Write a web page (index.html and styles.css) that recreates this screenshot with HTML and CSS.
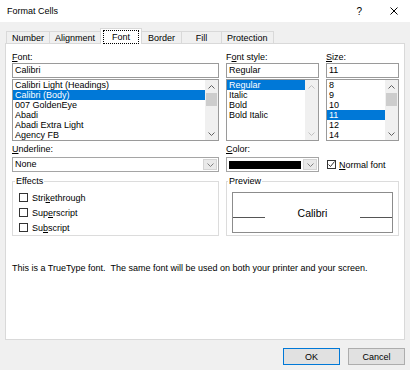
FILE: index.html
```html
<!DOCTYPE html>
<html lang="en">
<head>
    <meta charset="UTF-8">
    <meta name="viewport" content="width=device-width, initial-scale=1.0">
    <title>Format Cells</title>
    <link rel="stylesheet" href="styles.css">
</head>
<body>
<div class="dialog">
    <div class="titlebar">
        <span class="title">Format Cells</span>
        <span class="help">?</span>
        <svg class="close" width="8" height="8" viewBox="0 0 8 8"><path d="M0.5 0.5 L7.5 7.5 M7.5 0.5 L0.5 7.5" stroke="#000" stroke-width="1" fill="none"/></svg>
    </div>

    <div class="tabs">
        <div class="tab">Number</div>
        <div class="tab">Alignment</div>
        <div class="tab active"><span class="focus">Font</span></div>
        <div class="tab">Border</div>
        <div class="tab">Fill</div>
        <div class="tab">Protection</div>
    </div>

    <div class="panel">
        <div class="font-grid">
            <div class="label"><u>F</u>ont:</div>
            <div class="label">F<u>o</u>nt style:</div>
            <div class="label"><u>S</u>ize:</div>

            <div class="input">Calibri</div>
            <div class="input">Regular</div>
            <div class="input">11</div>

            <div class="list">
                <div class="items">
                    <div class="item">Calibri Light (Headings)</div>
                    <div class="item selected">Calibri (Body)</div>
                    <div class="item">007 GoldenEye</div>
                    <div class="item">Abadi</div>
                    <div class="item">Abadi Extra Light</div>
                    <div class="item">Agency FB</div>
                </div>
                <div class="scrollbar">
                    <div class="sb-arrow"><svg width="7" height="4" viewBox="0 0 7 4"><polyline points="0.5,3.5 3.5,0.5 6.5,3.5" fill="none" stroke="#606060"/></svg></div>
                    <div class="sb-thumb"></div>
                    <div class="sb-space"></div>
                    <div class="sb-arrow"><svg width="7" height="4" viewBox="0 0 7 4"><polyline points="0.5,0.5 3.5,3.5 6.5,0.5" fill="none" stroke="#606060"/></svg></div>
                </div>
            </div>
            <div class="list">
                <div class="items">
                    <div class="item selected">Regular</div>
                    <div class="item">Italic</div>
                    <div class="item">Bold</div>
                    <div class="item">Bold Italic</div>
                </div>
                <div class="scrollbar disabled">
                    <div class="sb-arrow"><svg width="7" height="4" viewBox="0 0 7 4"><polyline points="0.5,3.5 3.5,0.5 6.5,3.5" fill="none" stroke="#c0c0c0"/></svg></div>
                    <div class="sb-space"></div>
                    <div class="sb-arrow"><svg width="7" height="4" viewBox="0 0 7 4"><polyline points="0.5,0.5 3.5,3.5 6.5,0.5" fill="none" stroke="#c0c0c0"/></svg></div>
                </div>
            </div>
            <div class="list">
                <div class="items">
                    <div class="item">8</div>
                    <div class="item">9</div>
                    <div class="item">10</div>
                    <div class="item selected">11</div>
                    <div class="item">12</div>
                    <div class="item">14</div>
                </div>
                <div class="scrollbar">
                    <div class="sb-arrow"><svg width="7" height="4" viewBox="0 0 7 4"><polyline points="0.5,3.5 3.5,0.5 6.5,3.5" fill="none" stroke="#606060"/></svg></div>
                    <div class="sb-thumb"></div>
                    <div class="sb-space"></div>
                    <div class="sb-arrow"><svg width="7" height="4" viewBox="0 0 7 4"><polyline points="0.5,0.5 3.5,3.5 6.5,0.5" fill="none" stroke="#606060"/></svg></div>
                </div>
            </div>

            <div class="label label-gap"><u>U</u>nderline:</div>
            <div class="label label-gap"><u>C</u>olor:</div>
            <div></div>

            <div class="combo">
                <div class="combo-value">None</div>
                <div class="combo-btn"><svg width="7" height="4" viewBox="0 0 7 4"><polyline points="0.5,0.5 3.5,3.5 6.5,0.5" fill="none" stroke="#808080"/></svg></div>
            </div>
            <div class="combo">
                <div class="swatch"></div>
                <div class="combo-btn"><svg width="7" height="4" viewBox="0 0 7 4"><polyline points="0.5,0.5 3.5,3.5 6.5,0.5" fill="none" stroke="#808080"/></svg></div>
            </div>
            <div class="check-row normal">
                <span class="check"><svg width="7" height="7" viewBox="0 0 7 7"><polyline points="0.5,3.5 2.5,5.5 6.5,0.5" fill="none" stroke="#333"/></svg></span>
                <span><u>N</u>ormal font</span>
            </div>

            <fieldset class="group">
                <legend>Effects</legend>
                <div class="check-row"><span class="check"></span><span>Stri<u>k</u>ethrough</span></div>
                <div class="check-row"><span class="check"></span><span>Sup<u>e</u>rscript</span></div>
                <div class="check-row"><span class="check"></span><span>Su<u>b</u>script</span></div>
            </fieldset>
            <fieldset class="group preview">
                <legend>Preview</legend>
                <div class="preview-box">
                    <div class="rule"></div>
                    <div class="sample">Calibri</div>
                    <div class="rule"></div>
                </div>
            </fieldset>
        </div>

        <p class="info">This is a TrueType font.&nbsp; The same font will be used on both your printer and your screen.</p>
    </div>

    <div class="footer">
        <button class="btn default">OK</button>
        <button class="btn">Cancel</button>
    </div>
</div>
</body>
</html>
```

FILE: styles.css
```css
body {
    margin: 0;
    font-family: "Liberation Sans", Arial, sans-serif;
    font-size: 9px;
    color: #000;
}

.dialog {
    width: 410px;
    height: 370px;
    background-color: #f0f0f0;
    display: flex;
    flex-direction: column;
}

/* title bar */
.titlebar {
    height: 22px;
    background-color: #fff;
    display: flex;
    align-items: center;
    padding-left: 7px;
}

.title {
    flex: 1;
}

.help {
    font-size: 10px;
    margin-right: 28px;
}

.close {
    margin-right: 12px;
}

/* tabs */
.tabs {
    display: flex;
    align-items: flex-end;
    height: 15px;
    margin-top: 6px;
    padding-left: 6px;
}

.tab {
    box-sizing: border-box;
    height: 12px;
    min-width: 41px;
    padding: 1px 5px 0;
    line-height: 10px;
    text-align: center;
    border: 1px solid #d9d9d9;
    border-bottom: 0;
    margin-right: -1px;
}

.tab.active {
    position: relative;
    z-index: 1;
    height: 16px;
    margin-bottom: -1px;
    padding: 2px 3px 0;
    background-color: #fff;
}

.focus {
    display: inline-block;
    line-height: 10px;
    padding: 1px 8px;
    outline: 1px dotted #000;
}

/* tab page */
.panel {
    margin: 0 5px;
    height: 297px;
    box-sizing: border-box;
    background-color: #fff;
    border: 1px solid #d9d9d9;
    padding: 7px 0 0 6px;
}

.font-grid {
    display: grid;
    grid-template-columns: 207px 93px 73px;
    column-gap: 7px;
}

.label {
    line-height: 12px;
}

.label-gap {
    margin-top: 2px;
}

.input {
    box-sizing: border-box;
    height: 15px;
    border: 1px solid #9a9a9a;
    padding-left: 2px;
    line-height: 13px;
}

.list {
    box-sizing: border-box;
    height: 62px;
    margin-top: 1px;
    border: 1px solid #9a9a9a;
    display: flex;
}

.items {
    flex: 1;
}

.item {
    height: 10px;
    line-height: 10px;
    padding-left: 2px;
    white-space: nowrap;
}

.item.selected {
    background-color: #0078d7;
    color: #fff;
}

.scrollbar {
    width: 13px;
    background-color: #f0f0f0;
    display: flex;
    flex-direction: column;
}

.sb-arrow {
    height: 13px;
    display: flex;
    align-items: center;
    justify-content: center;
}

.sb-thumb {
    height: 13px;
    margin: 0 1px;
    background-color: #cdcdcd;
}

.sb-space {
    flex: 1;
}

.combo {
    box-sizing: border-box;
    height: 15px;
    margin-top: 2px;
    border: 1px solid #a5a5a5;
    display: flex;
}

.combo-value {
    flex: 1;
    padding-left: 2px;
    line-height: 13px;
}

.combo-btn {
    width: 12px;
    margin: 1px;
    background-color: #e9e9e9;
    border: 1px solid #d4d4d4;
    display: flex;
    align-items: center;
    justify-content: center;
}

.swatch {
    flex: 1;
    margin: 3px 1px 2px 2px;
    background-color: #000;
}

/* check boxes */
.check-row {
    display: flex;
    align-items: center;
    height: 15px;
}

.check {
    box-sizing: border-box;
    width: 9px;
    height: 9px;
    border: 1px solid #333;
    background-color: #fff;
    margin-right: 4px;
    display: flex;
}

.normal {
    margin-top: 2px;
    padding-left: 1px;
}

.normal .check {
    margin-right: 3px;
}

/* group boxes */
.group {
    margin: 3px 0 0;
    border: 1px solid #dcdcdc;
    padding: 3px 6px 0;
}

.group legend {
    line-height: 12px;
    padding: 0 1px;
    margin-left: -4px;
}

.preview {
    grid-column: 2 / 4;
    padding: 5px 5px 2px;
}

.preview-box {
    box-sizing: border-box;
    height: 41px;
    border: 1px solid #8c8c8c;
    display: flex;
    align-items: center;
    justify-content: space-between;
}

.rule {
    width: 32px;
    height: 1px;
    margin-top: 9px;
    background-color: #555;
}

.sample {
    font-size: 10.5px;
}

.info {
    margin: 26px 0 0;
    line-height: 12px;
}

/* buttons */
.footer {
    display: flex;
    justify-content: flex-end;
    gap: 8px;
    padding: 8px 5px 0;
}

.btn {
    width: 57px;
    height: 17px;
    padding: 0;
    font-family: inherit;
    font-size: 9px;
    color: #000;
    background-color: #e1e1e1;
    border: 1px solid #adadad;
}

.btn.default {
    border-color: #0078d7;
}
```
